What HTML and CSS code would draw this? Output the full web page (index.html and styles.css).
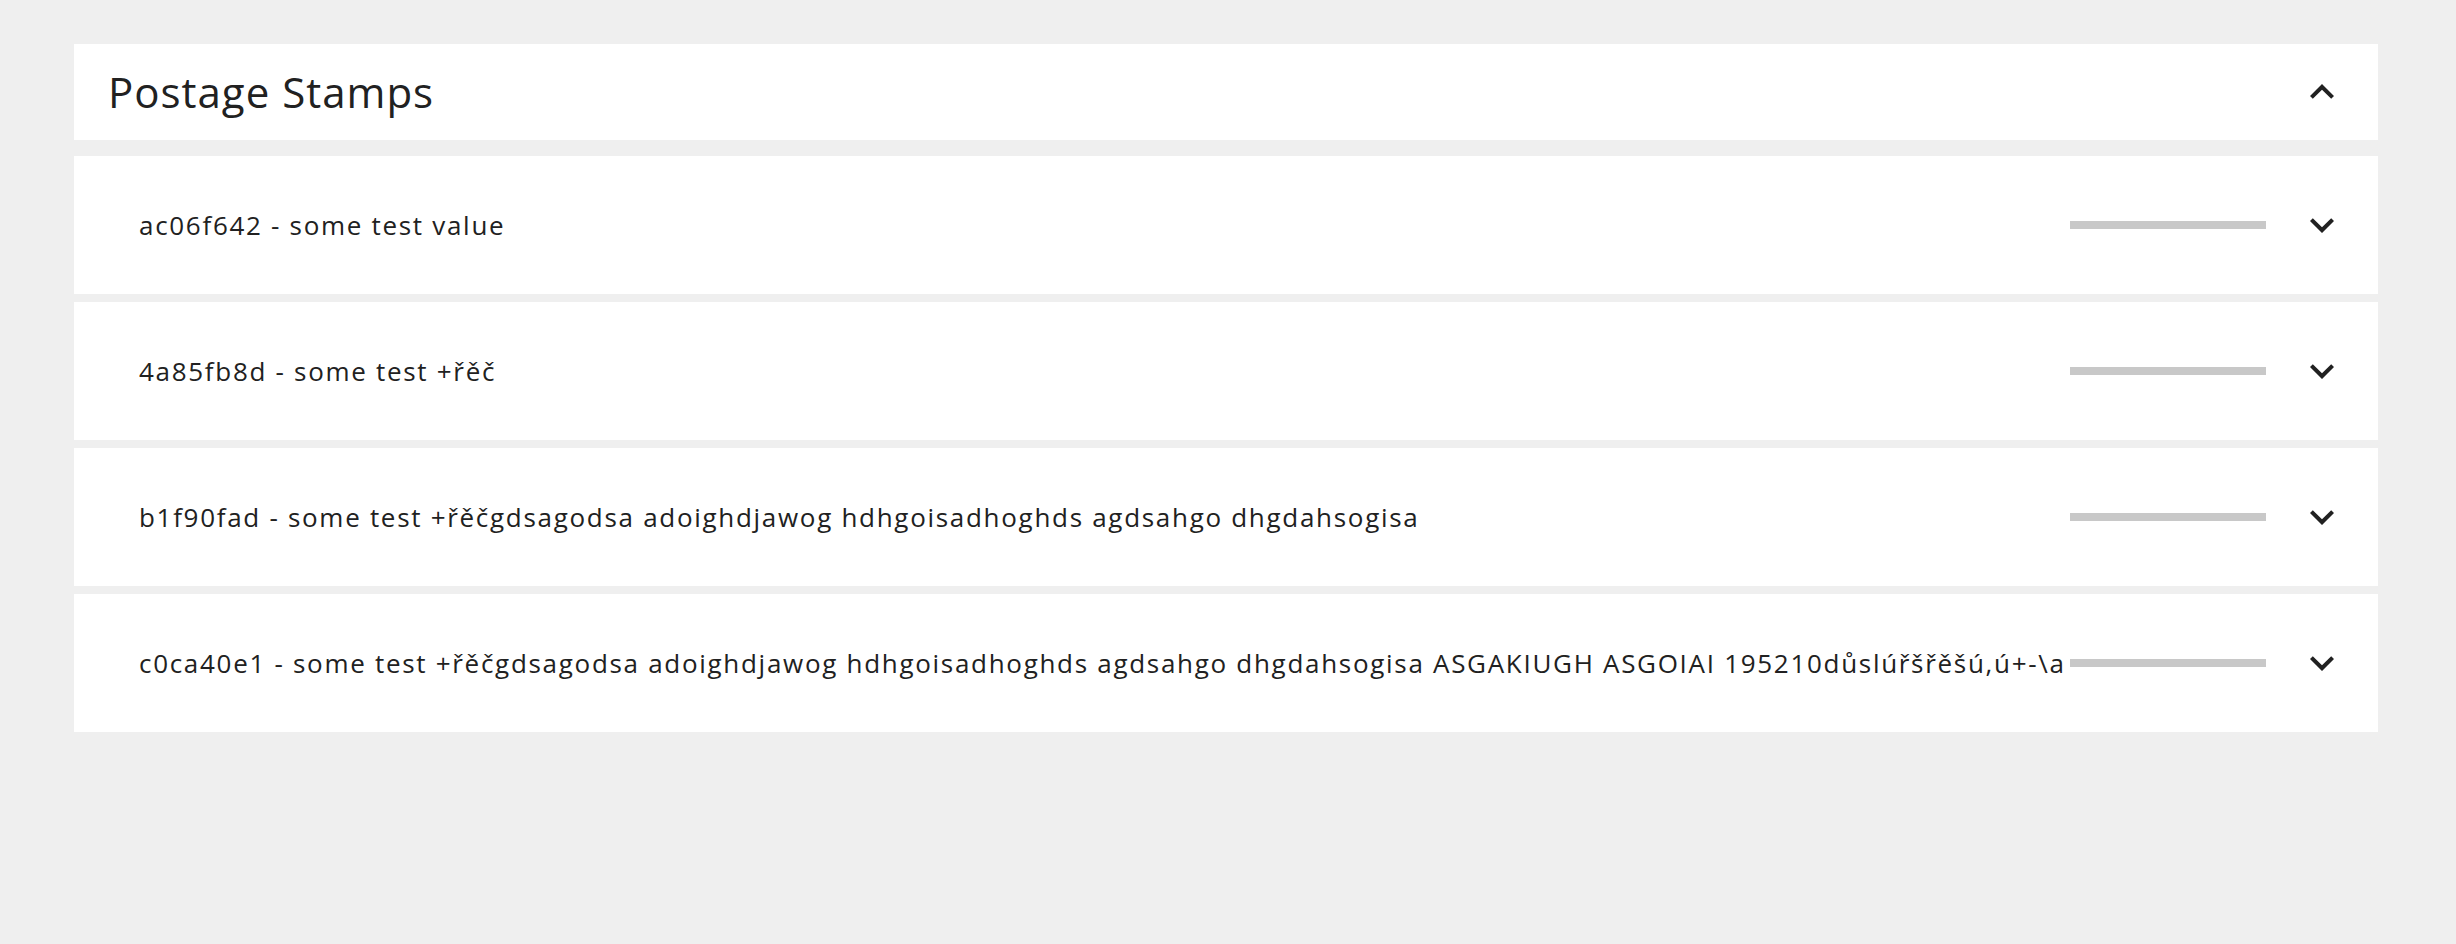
FILE: index.html
```html
<!DOCTYPE html>
<html>
<head>
    <title>Postage Stamps</title>
    <link rel="stylesheet" href="styles.css">
</head>
<body>
    <div class="container">
        <div class="panel-header">
            <h1>Postage Stamps</h1>
            <svg class="chevron" viewBox="0 0 24 24"><path d="M12 8l-6 6 1.41 1.41L12 10.83l4.59 4.58L18 14z"/></svg>
        </div>

        <ul class="stamp-list">
            <li class="stamp-item">
                <span class="stamp-name">ac06f642 - some test value</span>
                <div class="stamp-bar"></div>
                <svg class="chevron" viewBox="0 0 24 24"><path d="M16.59 8.59L12 13.17 7.41 8.59 6 10l6 6 6-6z"/></svg>
            </li>
            <li class="stamp-item">
                <span class="stamp-name">4a85fb8d - some test +řěč</span>
                <div class="stamp-bar"></div>
                <svg class="chevron" viewBox="0 0 24 24"><path d="M16.59 8.59L12 13.17 7.41 8.59 6 10l6 6 6-6z"/></svg>
            </li>
            <li class="stamp-item">
                <span class="stamp-name">b1f90fad - some test +řěčgdsagodsa adoighdjawog hdhgoisadhoghds agdsahgo dhgdahsogisa</span>
                <div class="stamp-bar"></div>
                <svg class="chevron" viewBox="0 0 24 24"><path d="M16.59 8.59L12 13.17 7.41 8.59 6 10l6 6 6-6z"/></svg>
            </li>
            <li class="stamp-item">
                <span class="stamp-name">c0ca40e1 - some test +řěčgdsagodsa adoighdjawog hdhgoisadhoghds agdsahgo dhgdahsogisa ASGAKIUGH ASGOIAI 195210důslúřšřěšú,ú+-\a</span>
                <div class="stamp-bar"></div>
                <svg class="chevron" viewBox="0 0 24 24"><path d="M16.59 8.59L12 13.17 7.41 8.59 6 10l6 6 6-6z"/></svg>
            </li>
        </ul>
    </div>
</body>
</html>
```

FILE: styles.css
```css
body {
    font-family: 'Open Sans', 'Noto Sans', sans-serif;
    background: #efefef;
    color: #212121;
    margin: 0;
    padding: 44px 78px 0 74px;
}

.panel-header {
    background: #fff;
    height: 96px;
    display: flex;
    align-items: center;
    padding: 0 32px 0 34px;
    margin-bottom: 16px;
}

.panel-header h1 {
    flex: 1;
    margin: 0;
    font-size: 42px;
    font-weight: 400;
    letter-spacing: 1px;
    line-height: 1;
}

.chevron {
    width: 48px;
    height: 48px;
    fill: #212121;
    flex-shrink: 0;
}

.stamp-list {
    list-style: none;
    margin: 0;
    padding: 0;
    display: flex;
    flex-direction: column;
    gap: 8px;
}

.stamp-item {
    background: #fff;
    height: 138px;
    display: flex;
    align-items: center;
    padding: 0 32px 0 65px;
}

.stamp-name {
    flex: 1;
    min-width: 0;
    overflow: hidden;
    white-space: nowrap;
    font-size: 26px;
    letter-spacing: 1.7px;
}

.stamp-bar {
    width: 196px;
    height: 8px;
    background: #c8c8c8;
    margin-right: 32px;
    flex-shrink: 0;
}
```
